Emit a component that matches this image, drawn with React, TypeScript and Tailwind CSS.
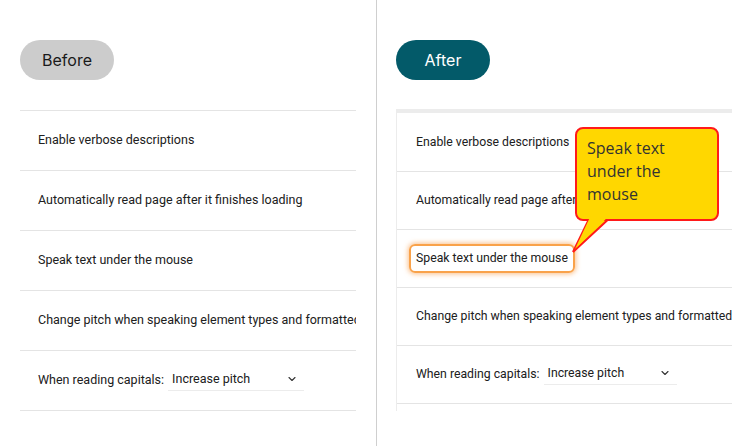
import { ChevronDown } from "lucide-react";

const rows = [
  "Enable verbose descriptions",
  "Automatically read page after it finishes loading",
  "Speak text under the mouse",
  "Change pitch when speaking element types and formatted text",
];

const listFont = { fontFamily: "Roboto, 'Liberation Sans', sans-serif" };

function CapitalsRow({ height, width }: { height: string; width: string }) {
  return (
    <div className={`flex items-center whitespace-nowrap ${height}`}>
      <span>When reading capitals:</span>
      <div className={`ml-[4px] flex items-center justify-between border-b border-[#ececec] pb-[2px] pl-[4px] pr-[6px] ${width}`}>
        <span>Increase pitch</span>
        <ChevronDown className="h-3 w-3 text-[#333]" strokeWidth={2.2} />
      </div>
    </div>
  );
}

function Pill({ label, active }: { label: string; active?: boolean }) {
  return (
    <div
      className={`flex h-10 w-[94px] items-center justify-center rounded-full text-[16px] ${
        active ? "bg-[#035a69] text-white" : "bg-[#cccccc] text-[#1a1a1a]"
      }`}
      style={{ fontFamily: "Inter, Lato, sans-serif" }}
    >
      {label}
    </div>
  );
}

export default function App() {
  return (
    <div className="flex h-[446px] w-[752px] overflow-hidden bg-white">
      {/* Before */}
      <section className="w-[376px] shrink-0 pl-5 pt-10">
        <Pill label="Before" />
        <div className="mt-[30px] w-[336px] overflow-hidden border-b border-[#e4e4e4] text-[12.5px] text-[#202020]" style={listFont}>
          {rows.map((r) => (
            <div key={r} className="flex h-[60px] items-center whitespace-nowrap border-t border-[#e4e4e4] pl-[18px]">
              {r}
            </div>
          ))}
          <div className="border-t border-[#e4e4e4] pl-[18px]">
            <CapitalsRow height="h-[59px]" width="w-[136px]" />
          </div>
        </div>
      </section>

      {/* After */}
      <section className="relative flex-1 border-l border-[#cfcfcf] pl-[19px] pt-10">
        <Pill label="After" active />
        <div className="mt-[29px] w-[336px] overflow-hidden border-l border-t-4 border-[#ececec] pb-[7px] text-[12.25px] text-[#202020]" style={listFont}>
          <div className="flex h-[58px] items-center whitespace-nowrap pl-[19px]">{rows[0]}</div>
          <div className="flex h-[58px] items-center whitespace-nowrap border-t border-[#e4e4e4] pl-[19px]">{rows[1]}</div>
          <div className="flex h-[58px] items-center whitespace-nowrap border-t border-[#e4e4e4] pl-3">
            <span className="rounded-[6px] border-2 border-[#f9a24a] px-[5px] py-[3px] shadow-[0_0_5px_1px_rgba(249,150,60,0.6)]">
              {rows[2]}
            </span>
          </div>
          <div className="flex h-[58px] items-center whitespace-nowrap border-t border-[#e4e4e4] pl-[19px]">{rows[3]}</div>
          <div className="border-y border-[#e4e4e4] pl-[19px]">
            <CapitalsRow height="h-[57px]" width="w-[133px]" />
          </div>
        </div>

        {/* callout */}
        <div className="absolute left-[198px] top-[127px] h-[94px] w-[144px]">
          <svg className="absolute left-[-4px] top-[86px]" width="50" height="42" viewBox="0 0 50 42">
            <path d="M20 2 L2 39 L42 2" fill="#ffd700" stroke="#ff1a1a" strokeWidth="2" strokeLinejoin="miter" />
          </svg>
          <div
            className="relative h-full w-full rounded-[8px] border-2 border-[#ff1a1a] bg-[#ffd700] pl-[10px] pt-[8px] text-[16px] leading-[23px] text-[#333]"
            style={{ fontFamily: "'Open Sans', sans-serif" }}
          >
            Speak text
            <br />
            under the
            <br />
            mouse
          </div>
          <svg className="absolute left-[-4px] top-[86px]" width="50" height="42" viewBox="0 0 50 42">
            <path d="M21 0 L4 36 L41 0 Z" fill="#ffd700" />
          </svg>
        </div>
      </section>
    </div>
  );
}
